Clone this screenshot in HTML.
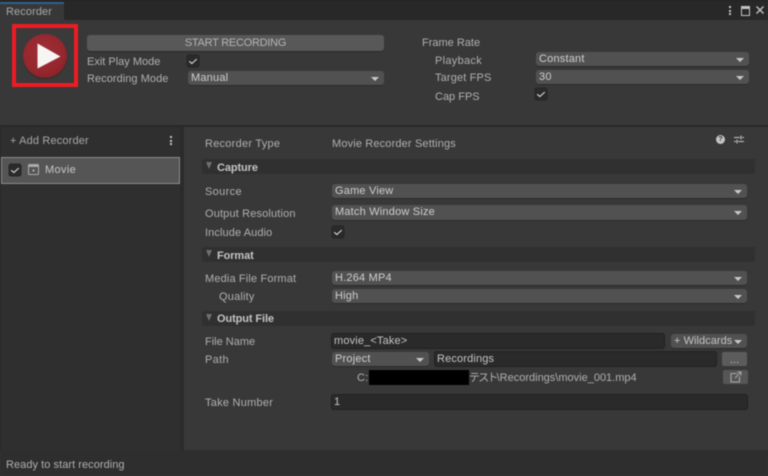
<!DOCTYPE html>
<html><head><meta charset="utf-8">
<style>
html,body{margin:0;padding:0;background:#383838}
#r{position:relative;width:768px;height:476px;overflow:hidden;background:#383838;font-family:"Liberation Sans","Noto Sans CJK JP",sans-serif;font-size:11px;letter-spacing:.15px;color:#b0b0b0;filter:blur(.45px)}
#r div,#r svg{position:absolute}
.t{white-space:nowrap;line-height:14px;height:14px}
.dd{background:#515151;border-radius:3px;box-shadow:0 1px 0 #2a2a2a;color:#cfcfcf;height:14px;line-height:14px;padding-left:3px;white-space:nowrap;letter-spacing:.2px}
.dd:after{content:"";position:absolute;right:5px;top:6px;border-left:4px solid transparent;border-right:4px solid transparent;border-top:4px solid #c8c8c8}
.cb{width:12px;height:12px;background:#2a2a2a;border-radius:2px;box-shadow:0 0 0 .5px #222}
.cb:after{content:"";position:absolute;left:3.5px;top:2px;width:3px;height:6px;border:solid #e8e8e8;border-width:0 1.6px 1.6px 0;transform:rotate(40deg) skewX(-8deg)}
.sec{left:202px;width:553px;height:15px;background:#303030}
.sec b{position:absolute;left:15px;top:1px;line-height:15px;color:#c4c4c4;font-weight:bold;white-space:nowrap;letter-spacing:-.1px}
.sec:before{content:"";position:absolute;left:4px;top:3px;border-left:3.5px solid transparent;border-right:3.5px solid transparent;border-top:7px solid #6f6f6f}
.in{background:#2a2a2a;border-radius:3px;box-shadow:inset 0 0 0 1px #212121;height:16px;line-height:16px;color:#c4c4c4;padding-left:3px;white-space:nowrap}
</style></head><body>
<div id="r">
<!-- title bar -->
<div style="left:0;top:0;width:768px;height:20px;background:#282828"></div>
<div style="left:0;top:0;width:768px;height:1px;background:#1f1f1f"></div>
<div style="left:0;top:3px;width:64px;height:17px;background:#383838"></div>
<div style="left:0;top:2px;width:64px;height:2px;background:#2f5f8a"></div>
<div class="t" style="left:6px;top:5px;color:#a8a8a8;letter-spacing:.1px">Recorder</div>
<div style="left:729px;top:6px;width:2px;height:2px;background:#c4c4c4"></div>
<div style="left:729px;top:9.500px;width:2px;height:2px;background:#c4c4c4"></div>
<div style="left:729px;top:13px;width:2px;height:2px;background:#c4c4c4"></div>
<div style="left:741px;top:6px;width:7px;height:6px;border:1.5px solid #c4c4c4;border-top-width:3px"></div>
<svg style="left:755px;top:5px" width="10" height="10" viewBox="0 0 10 10"><path d="M1.500 1.500L8.500 8.500M8.500 1.500L1.500 8.500" stroke="#c4c4c4" stroke-width="1.400" fill="none"/></svg>

<!-- red box & play -->
<div style="left:12px;top:24px;width:58px;height:55px;border:4px solid #ed1c24;background:#3a3a3a"></div>
<div style="left:23px;top:34px;width:44px;height:44px;border-radius:50%;background:radial-gradient(circle at 45% 40%,#a02f36 0,#94262d 60%,#741c22 100%);box-shadow:0 1px 1px #2a2a2a"></div>
<svg style="left:36px;top:42px" width="26" height="28" viewBox="0 0 26 28"><path d="M1.500 1.500L24.500 14.500L1.500 26.500Z" fill="#f7f4f4"/></svg>

<!-- top left -->
<div style="left:87px;top:35px;width:297px;height:16px;background:#585858;border-radius:3px;box-shadow:0 1px 0 #2a2a2a;text-align:center;line-height:16px;color:#b4b4b4;letter-spacing:-.25px">START RECORDING</div>
<div class="t" style="left:87px;top:55px;letter-spacing:0">Exit Play Mode</div>
<div class="cb" style="left:187px;top:55px"></div>
<div class="t" style="left:87px;top:72px;letter-spacing:.05px">Recording Mode</div>
<div class="dd" style="left:188px;top:71px;width:193px">Manual</div>

<!-- top right -->
<div class="t" style="left:422px;top:36px;letter-spacing:0">Frame Rate</div>
<div class="t" style="left:435px;top:54px;letter-spacing:.3px">Playback</div>
<div class="dd" style="left:536px;top:52px;width:210px">Constant</div>
<div class="t" style="left:435px;top:71px;letter-spacing:.15px">Target FPS</div>
<div class="dd" style="left:536px;top:70px;width:210px">30</div>
<div class="t" style="left:435px;top:89.500px;letter-spacing:0">Cap FPS</div>
<div class="cb" style="left:535px;top:88px"></div>

<!-- divider, left panel -->
<div style="left:0;top:125px;width:768px;height:2px;background:#292929"></div>
<div style="left:0;top:127px;width:184px;height:323px;background:#2f2f2f"></div>
<div style="left:180px;top:127px;width:4px;height:323px;background:#2b2b2b"></div>
<div style="left:0;top:127px;width:1px;height:349px;background:#262626"></div>
<div class="t" style="left:10px;top:134px;color:#a8a8a8">+ Add Recorder</div>
<div style="left:169.500px;top:136px;width:2px;height:2px;background:#c4c4c4"></div>
<div style="left:169.500px;top:139.500px;width:2px;height:2px;background:#c4c4c4"></div>
<div style="left:169.500px;top:143px;width:2px;height:2px;background:#c4c4c4"></div>
<div style="left:1px;top:157px;width:177px;height:25px;background:#555;border:1px solid #8c8c8c"></div>
<div class="cb" style="left:9px;top:164px"></div>
<svg style="left:28px;top:164px" width="11" height="11" viewBox="0 0 11 11"><rect x=".5" y=".5" width="10" height="10" rx="1" fill="none" stroke="#aaa"/><rect x=".5" y=".5" width="10" height="2.500" fill="#aaa"/><rect x="4.500" y="5.500" width="2" height="2" fill="#aaa"/></svg>
<div class="t" style="left:45px;top:163px;color:#c8c8c8;letter-spacing:.35px">Movie</div>

<!-- right panel -->
<div class="t" style="left:205px;top:136.500px;letter-spacing:.25px">Recorder Type</div>
<div class="t" style="left:332px;top:136.500px">Movie Recorder Settings</div>
<div style="left:716px;top:135px;width:9px;height:9px;border-radius:50%;background:#c4c4c4"></div>
<div style="left:716px;top:135px;width:9px;height:9px;line-height:9px;text-align:center;font-size:7px;font-weight:bold;color:#333;letter-spacing:0">?</div>
<svg style="left:734px;top:134px" width="11" height="11" viewBox="0 0 11 11"><path d="M0 3.500H6M8 3.500H10M0 7.500H2M4 7.500H10M7 1.500V5.500M3 5.500V9.500" stroke="#c4c4c4" stroke-width="1" fill="none"/></svg>

<div class="sec" style="top:159px"><b style="top:1.500px">Capture</b></div>
<div class="t" style="left:205px;top:185px;letter-spacing:.35px">Source</div>
<div class="dd" style="left:332px;top:184px;width:412px">Game View</div>
<div class="t" style="left:205px;top:206.500px">Output Resolution</div>
<div class="dd" style="left:332px;top:205px;width:412px;height:15px;line-height:15px">Match Window Size</div>
<div class="t" style="left:205px;top:226px;letter-spacing:.1px">Include Audio</div>
<div class="cb" style="left:332px;top:226px"></div>

<div class="sec" style="top:247px"><b style="top:1.500px">Format</b></div>
<div class="t" style="left:205px;top:271.500px">Media File Format</div>
<div class="dd" style="left:332px;top:271px;width:412px">H.264 MP4</div>
<div class="t" style="left:219px;top:289.500px;letter-spacing:.2px">Quality</div>
<div class="dd" style="left:332px;top:289px;width:412px">High</div>

<div class="sec" style="top:311px"><b>Output File</b></div>
<div class="t" style="left:205px;top:335px;letter-spacing:0">File Name</div>
<div class="in" style="left:331px;top:333px;width:331px">movie_&lt;Take&gt;</div>
<div class="dd" style="left:671px;top:334px;width:73px;color:#c4c4c4;letter-spacing:.05px">+ Wildcards</div>
<div class="t" style="left:205px;top:353px;letter-spacing:.35px">Path</div>
<div class="dd" style="left:332px;top:352px;width:94px">Project</div>
<div class="in" style="left:434px;top:351px;width:280px">Recordings</div>
<div style="left:722px;top:352px;width:25px;height:14px;background:#5c5c5c;border-radius:2px;text-align:center;line-height:17px;color:#bbb">...</div>
<div class="t" style="left:357px;top:371px">C:</div>
<div class="t" style="left:469px;top:371px;letter-spacing:0"><span style="letter-spacing:-1.8px">テスト</span>\Recordings\movie_001.mp4</div>
<div style="left:369px;top:370px;width:100px;height:15px;background:#000"></div>
<div style="left:723px;top:370px;width:25px;height:14px;background:#565656;border-radius:2px"></div>
<svg style="left:729px;top:370px" width="14" height="14" viewBox="0 0 14 14"><path d="M8 3.500H2V12H10.500V6.500" fill="none" stroke="#a8a8a8" stroke-width="1.100"/><path d="M6 8L11.500 2.500M8.500 2H12V5.500" fill="none" stroke="#a8a8a8" stroke-width="1"/></svg>
<div class="t" style="left:205px;top:396px;letter-spacing:.25px">Take Number</div>
<div class="in" style="left:331px;top:394px;width:414px">1</div>

<!-- status bar -->
<div style="left:0;top:450px;width:768px;height:26px;background:#2e2e2e"></div>
<div class="t" style="left:6px;top:458px;letter-spacing:.05px">Ready to start recording</div>
</div>
</body></html>
